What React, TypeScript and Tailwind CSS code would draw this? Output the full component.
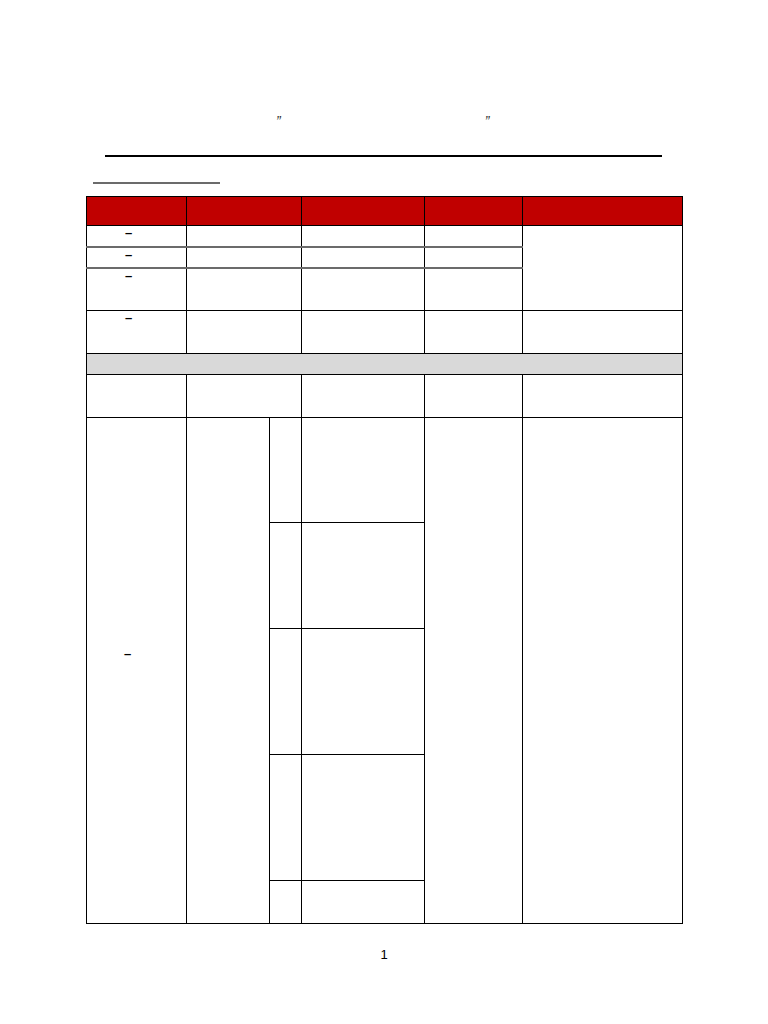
import React from 'react';

// Document page: title quotes, rules, and a mostly empty red-headed table.

const cell = 'border border-black p-0';
const grayBottom = 'border-b-2 border-b-[#6b6b6b]';
const dash = (
  <span className="block pl-[38px] pt-[1px] text-[13px] font-bold leading-[12px] text-black">–</span>
);

export default function App() {
  return (
    <div
      className="relative w-[768px] h-[1024px] bg-white text-black"
      style={{ fontFamily: '"Liberation Sans", "Open Sans", sans-serif' }}
    >
      <div className="h-[114px]" />
      {/* title row — only the quote marks survive */}
      <div className="flex h-[14px] text-[14px] italic leading-[14px] text-[#333]">
        <span className="ml-[276px]">”</span>
        <span className="ml-[204px]">”</span>
      </div>
      <div className="h-[27px]" />
      <div className="ml-[105px] w-[557px] h-[2px] bg-black" />
      <div className="h-[25px]" />
      <div className="ml-[93px] w-[127px] h-[2px] bg-[#6b6b6b]" />
      <div className="h-[12px]" />

      <table className="ml-[86px] w-[596px] table-fixed border-collapse border border-black">
        <colgroup>
          <col className="w-[100px]" />
          <col className="w-[83px]" />
          <col className="w-[32px]" />
          <col className="w-[123px]" />
          <col className="w-[98px]" />
          <col className="w-[160px]" />
        </colgroup>
        <tbody className="[&_td]:align-top">
          <tr className="h-[29px] bg-[#c00000]">
            <td className={cell} />
            <td className={cell} colSpan={2} />
            <td className={cell} />
            <td className={cell} />
            <td className={cell} />
          </tr>
          <tr className="h-[21px]">
            <td className={`${cell} ${grayBottom}`}>{dash}</td>
            <td className={`${cell} ${grayBottom}`} colSpan={2} />
            <td className={`${cell} ${grayBottom}`} />
            <td className={`${cell} ${grayBottom}`} />
            <td className={cell} rowSpan={3} />
          </tr>
          <tr className="h-[21px]">
            <td className={`${cell} ${grayBottom}`}>{dash}</td>
            <td className={`${cell} ${grayBottom}`} colSpan={2} />
            <td className={`${cell} ${grayBottom}`} />
            <td className={`${cell} ${grayBottom}`} />
          </tr>
          <tr className="h-[43px]">
            <td className={cell}>{dash}</td>
            <td className={cell} colSpan={2} />
            <td className={cell} />
            <td className={cell} />
          </tr>
          <tr className="h-[43px]">
            <td className={cell}>{dash}</td>
            <td className={cell} colSpan={2} />
            <td className={cell} />
            <td className={cell} />
            <td className={cell} />
          </tr>
          <tr className="h-[21px] bg-[#d9d9d9]">
            <td className={cell} colSpan={6} />
          </tr>
          <tr className="h-[43px]">
            <td className={cell} />
            <td className={cell} colSpan={2} />
            <td className={cell} />
            <td className={cell} />
            <td className={cell} />
          </tr>
          <tr className="h-[105px]">
            <td className={cell} rowSpan={5}>
              <span className="block pl-[37px] pt-[230px] text-[13px] font-bold leading-[12px]">–</span>
            </td>
            <td className={cell} rowSpan={5} />
            <td className={cell} />
            <td className={cell} />
            <td className={cell} rowSpan={5} />
            <td className={cell} rowSpan={5} />
          </tr>
          <tr className="h-[106px]">
            <td className={cell} />
            <td className={cell} />
          </tr>
          <tr className="h-[126px]">
            <td className={cell} />
            <td className={cell} />
          </tr>
          <tr className="h-[126px]">
            <td className={cell} />
            <td className={cell} />
          </tr>
          <tr className="h-[43px]">
            <td className={cell} />
            <td className={cell} />
          </tr>
        </tbody>
      </table>

      <div className="mt-[23px] text-center text-[13px] leading-[16px] text-black">1</div>
    </div>
  );
}
